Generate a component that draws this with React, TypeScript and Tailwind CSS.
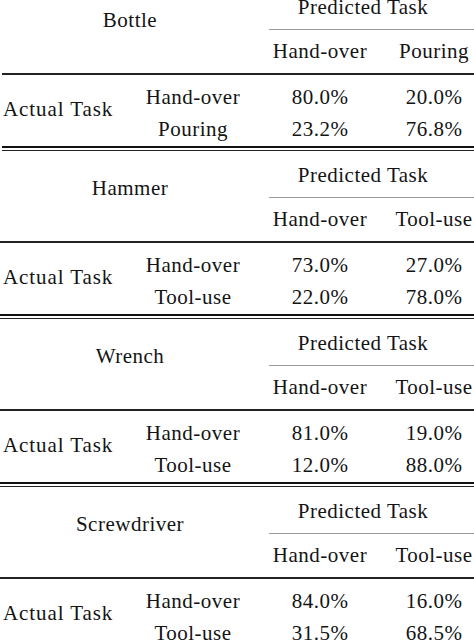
type Block = {
  object: string;
  classes: [string, string];
  rows: { label: string; values: [string, string] }[];
};

const blocks: Block[] = [
  {
    object: 'Bottle',
    classes: ['Hand-over', 'Pouring'],
    rows: [
      { label: 'Hand-over', values: ['80.0%', '20.0%'] },
      { label: 'Pouring', values: ['23.2%', '76.8%'] },
    ],
  },
  {
    object: 'Hammer',
    classes: ['Hand-over', 'Tool-use'],
    rows: [
      { label: 'Hand-over', values: ['73.0%', '27.0%'] },
      { label: 'Tool-use', values: ['22.0%', '78.0%'] },
    ],
  },
  {
    object: 'Wrench',
    classes: ['Hand-over', 'Tool-use'],
    rows: [
      { label: 'Hand-over', values: ['81.0%', '19.0%'] },
      { label: 'Tool-use', values: ['12.0%', '88.0%'] },
    ],
  },
  {
    object: 'Screwdriver',
    classes: ['Hand-over', 'Tool-use'],
    rows: [
      { label: 'Hand-over', values: ['84.0%', '16.0%'] },
      { label: 'Tool-use', values: ['31.5%', '68.5%'] },
    ],
  },
];

const ConfusionBlock = ({ block, first }: { block: Block; first: boolean }) => {
  const indent = first ? 'ml-[2px]' : '';
  return (
    <div className={`h-[168px] ${first ? 'mt-[-16px]' : ''}`}>
      {/* Header */}
      <div className="flex h-[89px]">
        <div className="w-[260px] pt-[26px] text-center">{block.object}</div>
        <div className="flex w-[228px] flex-col">
          <div className="h-[45px] pt-[13px] pr-[22px] text-center">Predicted Task</div>
          <div className="ml-[9px] h-px bg-[#9a9a9a]" />
          <div className="flex pt-[11px]">
            <div className="w-[120px] text-center">{block.classes[0]}</div>
            <div className="w-[108px] text-center">{block.classes[1]}</div>
          </div>
        </div>
      </div>
      <div className={`h-[2px] bg-[#222] ${indent}`} />

      {/* Body */}
      <div className="flex h-[71px]">
        <div className="w-[126px] pt-[24px] pl-[3px] tracking-[0.9px]">Actual Task</div>
        <div className="flex flex-col pt-[12px]">
          {block.rows.map((row, i) => (
            <div key={row.label} className={`flex ${i === 0 ? 'h-[32px]' : ''}`}>
              <div className="w-[134px] text-center">{row.label}</div>
              <div className="w-[120px] text-center">{row.values[0]}</div>
              <div className="w-[108px] text-center">{row.values[1]}</div>
            </div>
          ))}
        </div>
      </div>

      {/* Double rule */}
      <div className={`h-[2px] bg-[#111] ${indent}`} />
      <div className="h-[2px]" />
      <div className={`h-px bg-[#222] ${indent}`} />
    </div>
  );
};

export default function App() {
  return (
    <div className="h-[642px] w-[474px] overflow-hidden bg-white">
      <div className="w-[488px] font-['Liberation_Serif'] text-[21px] leading-[21px] tracking-[0.5px] text-[#141414]">
        {blocks.map((b, i) => (
          <ConfusionBlock key={b.object} block={b} first={i === 0} />
        ))}
      </div>
    </div>
  );
}
